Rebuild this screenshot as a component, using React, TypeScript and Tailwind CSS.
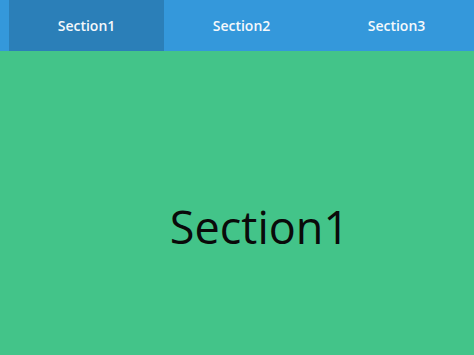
export default function App() {
  const tabs = ["Section1", "Section2", "Section3"];
  return (
    <div className="w-[474px] h-[355px] flex flex-col bg-[#43c489]" style={{ fontFamily: '"Open Sans", "Noto Sans", sans-serif' }}>
      <div className="h-[51px] flex bg-[#3498db] pl-[9px]">
        {tabs.map((t, i) => (
          <div
            key={t}
            className={`w-[155px] flex items-center justify-center text-[14px] font-semibold text-[#f4f8fb] ${i === 0 ? "bg-[#2b7fb8]" : ""}`}
          >
            {t}
          </div>
        ))}
      </div>
      <div className="flex-1 flex items-center justify-center pl-[45px] pt-[48px]">
        <span className="text-[45px] text-[#0a0a0a]">Section1</span>
      </div>
    </div>
  );
}
